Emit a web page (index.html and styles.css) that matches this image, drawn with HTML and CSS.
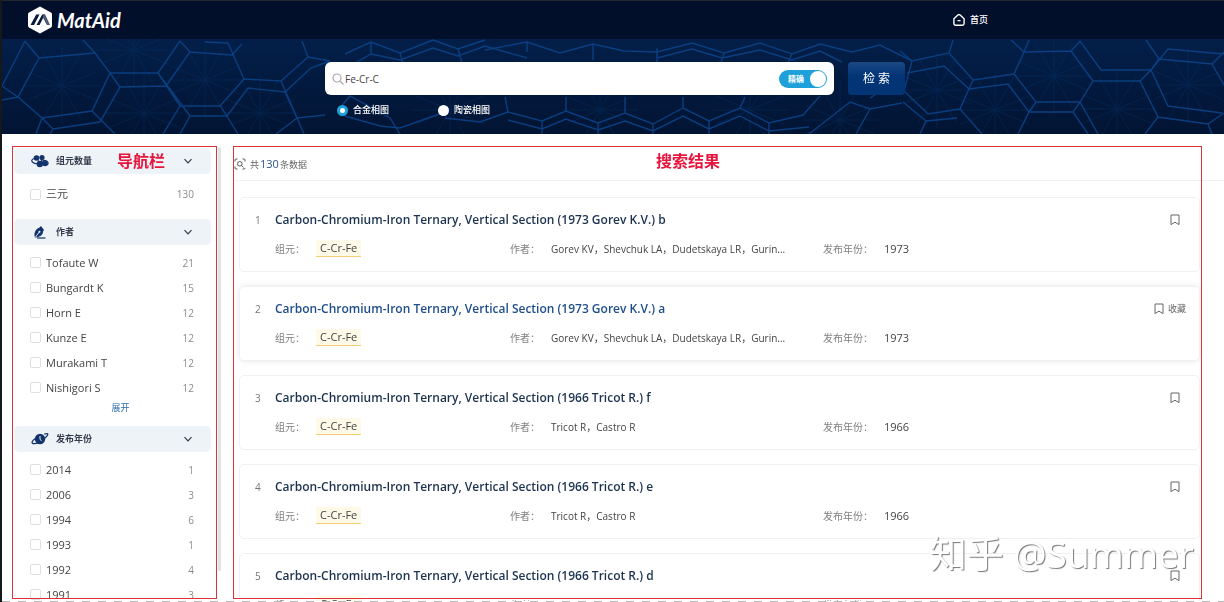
FILE: index.html
```html
<!DOCTYPE html>
<html lang="zh-CN">
<head>
    <meta charset="UTF-8">
    <meta name="viewport" content="width=device-width, initial-scale=1.0">
    <title>MatAid</title>
    <link rel="stylesheet" href="styles.css">
</head>
<body>
    <svg class="sprite" aria-hidden="true">
        <symbol id="chevron" viewBox="0 0 10 10"><path d="M1.5 3.2 5 6.8l3.5-3.6" fill="none" stroke="currentColor" stroke-width="1.2"/></symbol>
        <symbol id="bookmark" viewBox="0 0 10 12"><path d="M1 1h8v9.6L5 8.2l-4 2.4z" fill="none" stroke="currentColor" stroke-width="1"/></symbol>
        <symbol id="spokes" viewBox="-40 -40 80 80"><path d="M-38 0H38M-34-14 34 14M-34 14 34-14M-19-33 19 33M-19 33 19-33M0-38V38"/></symbol>
    </svg>

    <header class="topbar">
        <a class="logo" href="#">
            <svg width="24" height="28" viewBox="0 0 24 28">
                <path d="M12 .5 23 6.6a2 2 0 0 1 1 1.6v11.6a2 2 0 0 1-1 1.6L12 27.5 1 21.4a2 2 0 0 1-1-1.6V8.2a2 2 0 0 1 1-1.6z" fill="#fff"/>
                <path d="M2.5 19 8.200 8.500h3.300L6 19zM8.500 19l5.700-10.500h2.600L11.600 19z" fill="#0a1a3c"/>
                <path d="M15.500 8.500h1.700L22 19h-3.200l-4-7.500z" fill="#4d5a74"/>
            </svg>
            <span>MatAid</span>
        </a>
        <a class="home" href="#">
            <svg width="12" height="12" viewBox="0 0 12 12" fill="none" stroke="#fff" stroke-width="1.4"><path d="M.9 4.7 4.6 1.3a2 2 0 0 1 2.800 0l3.700 3.400v4.800a1.700 1.700 0 0 1-1.700 1.700H2.600A1.700 1.700 0 0 1 .9 9.500zM4.500 6.600h3"/></svg>
            首页
        </a>
    </header>

    <section class="hero">
        <svg class="hero-bg" viewBox="2 39 1222 95" preserveAspectRatio="xMidYMid slice" fill="none" aria-hidden="true">
            <g class="spokes">
                <use href="#spokes" x="22" y="46" width="80" height="80"/>
                <use href="#spokes" x="104" y="73" width="80" height="80"/>
                <use href="#spokes" x="165" y="40" width="80" height="80"/>
                <use href="#spokes" x="94" y="10" width="80" height="80"/>
                <use href="#spokes" x="220" y="73" width="80" height="80"/>
                <use href="#spokes" x="410" y="70" width="80" height="80"/>
                <use href="#spokes" x="560" y="70" width="80" height="80"/>
                <use href="#spokes" x="710" y="70" width="80" height="80"/>
                <use href="#spokes" x="800" y="80" width="80" height="80"/>
                <use href="#spokes" x="897" y="50" width="80" height="80"/>
                <use href="#spokes" x="955" y="70" width="80" height="80"/>
                <use href="#spokes" x="1014" y="36" width="80" height="80"/>
                <use href="#spokes" x="1077" y="69" width="80" height="80"/>
                <use href="#spokes" x="1148" y="45" width="80" height="80"/>
            </g>
            <g class="cells">
                <path d="M25 41 2 86l16 11 24 21 50-7 18-38-15-20-12-13M25 41l14 17 56-5M39 58 18 97l-16 3M42 118l-6 16M42 118l11 11 47-7 20-35-10-14h48l22-32M120 87l46-1 24-34-10-11M158 73l22 33h40l24-27-16-36-23-1M190 52l42 3 10-11M158 73l32 43h37l21-28 37 4M180 106l-17 28M190 116l-10 18M220 105l18 29M92 111l23 23M53 129l-3 5"/>
                <path d="M302 41l6 16-27 24-37-2M308 57l22 4M330 61l-19 7-26 24 12 26-21 16M281 81l16 37 28-3M297 118l7 16M345 54l26-12 29 11 33-13 25 9 27-9M350 66l21-12 29 6 33-12 25 8 27-10 42 12M371 42v12M400 53l3 10M458 49l4 14M340 108l10-12 40 22 10 16M345 116l35 10 20 2 45-16M445 118l35 4 28-10-3-15"/>
                <path d="M508 112l34 9 24-10 32 12 27-10 28 11 30-16 26 13 31-13 29 15 34-8 17-19M508 120l34 9 24-10 32 11 27-9 28 10 30-15 26 13 31-13 29 15 40-4M566 111V97M625 97v16M683 97v11M745 97l-5 11M542 121v13M598 123v11M653 124v10M709 121v13M769 123v11"/>
                <path d="M485 50l42-8 33 11 33-9 31 7 33 1 35-9 32 10 36-10 32 11 28-10 32 8 28-7 32 16 37-8 4-13M527 42v10M593 44v16M657 48v14M724 53l-3 10M792 54l-4 9M657 58l35-9 30 9M722 58l38-8 32 10 28-9 22 11M870 98l14-9 14 4M870 109l32-6M870 109l-14 25M870 109l-20-7-41 32"/>
                <path d="M900 51l12 10-8 30 24 23 32-5 13-29-24-27M973 80l41-6 10-22 5-12M1011 40l13 12 47-1 9-10 21 29h50l17-21 56 5M1071 51l22 30-13 21h-44l-22-28M1093 81h47l11-11 17 36 54 7M1140 81l18 36 50 7 16-11M1146 40l13 19 53 5 12-12M1159 59l-8 11M1212 64l12 21M907 73l37-7 25 23 39-5 21 28-11 22M1029 112l7-10M1029 112h44l7-10 18 32M1073 112l15 22M960 109l22 25M957 118l-31 3-6 13M903 102l23 19M1158 117l-13 17M1208 124l4 10"/>
            </g>
        </svg>

        <form class="search">
            <div class="search-row">
                <div class="search-box">
                    <svg width="12" height="12" viewBox="0 0 12 12" fill="none" stroke="#a9a9a9" stroke-width="1.2"><circle cx="5" cy="5" r="4"/><path d="m8 8 3.5 3.5"/></svg>
                    <input class="search-input" type="text" value="Fe-Cr-C" aria-label="搜索">
                    <label class="switch">
                        <input type="checkbox" checked>
                        <span>精确</span>
                    </label>
                </div>
                <button class="search-btn" type="button">检 索</button>
            </div>
            <div class="search-types">
                <label><input type="radio" name="type" checked>合金相图</label>
                <label><input type="radio" name="type">陶瓷相图</label>
            </div>
        </form>
    </section>

    <main class="content">
        <aside class="panel sidebar">
            <span class="note note-nav">导航栏</span>
            <section class="group">
                <button class="group-head" type="button">
                    <svg width="18" height="14" viewBox="0 0 18 14"><g fill="#12336b"><circle cx="5.5" cy="4" r="2.8"/><circle cx="11" cy="3.500" r="2.600"/><circle cx="8.800" cy="10" r="3.200"/><circle cx="14" cy="9.500" r="2.800"/></g><path d="M3.500 4.500C.5 5 0 7 2 8.500s4 1.500 6 .5 4-3 6.500-2.500 3.500 3 1.500 4.500" fill="none" stroke="#12336b" stroke-width="1.200"/><path d="M7 6.500 9 7.800l2-1.600M11.200 10.500l.8-2" fill="none" stroke="#12336b"/></svg>
                    <span>组元数量</span>
                    <svg class="chevron"><use href="#chevron"/></svg>
                </button>
                <ul>
                    <li class="single"><label><input type="checkbox">三元</label><em>130</em></li>
                </ul>
            </section>
            <section class="group">
                <button class="group-head" type="button">
                    <svg width="18" height="14" viewBox="0 0 18 14"><path d="M4 12.500C2.500 8.500 4 4.500 8.500 2.500L10 1l3 4-1 1.500c.2 3-2.500 5.500-8 6z" fill="#12336b"/><path d="m4.500 12 3.800-5" stroke="#eef3f8" stroke-width=".9"/><circle cx="8.500" cy="6.800" r="1" fill="#eef3f8"/><path d="M6 13h8.500" stroke="#12336b" stroke-width="1.200"/></svg>
                    <span>作者</span>
                    <svg class="chevron"><use href="#chevron"/></svg>
                </button>
                <ul>
                    <li><label><input type="checkbox">Tofaute W</label><em>21</em></li>
                    <li><label><input type="checkbox">Bungardt K</label><em>15</em></li>
                    <li><label><input type="checkbox">Horn E</label><em>12</em></li>
                    <li><label><input type="checkbox">Kunze E</label><em>12</em></li>
                    <li><label><input type="checkbox">Murakami T</label><em>12</em></li>
                    <li><label><input type="checkbox">Nishigori S</label><em>12</em></li>
                </ul>
                <a class="more" href="#">展开</a>
            </section>
            <section class="group">
                <button class="group-head" type="button">
                    <svg width="18" height="14" viewBox="0 0 18 14"><circle cx="9" cy="7" r="5.2" fill="#12336b"/><path d="M5 6C1 8.500.2 11 2 11.500c3 .7 8-2 11-4.500s4.500-4.600 3.500-5.300c-.7-.5-2 0-3.200.5" fill="none" stroke="#12336b" stroke-width="1.3"/><path d="M9 4v3.500l1.500 1" fill="none" stroke="#eef3f8"/></svg>
                    <span>发布年份</span>
                    <svg class="chevron"><use href="#chevron"/></svg>
                </button>
                <ul>
                    <li><label><input type="checkbox">2014</label><em>1</em></li>
                    <li><label><input type="checkbox">2006</label><em>3</em></li>
                    <li><label><input type="checkbox">1994</label><em>6</em></li>
                    <li><label><input type="checkbox">1993</label><em>1</em></li>
                    <li><label><input type="checkbox">1992</label><em>4</em></li>
                    <li><label><input type="checkbox">1991</label><em>3</em></li>
                </ul>
            </section>
        </aside>
        <div class="scrollbar"></div>

        <section class="panel results">
            <span class="note note-results">搜索结果</span>
            <div class="summary">
                <svg width="12" height="12" viewBox="0 0 12 12" fill="none" stroke="#555" stroke-width="1"><path d="M1 3.500V2a1 1 0 0 1 1-1h1.500M8.500 1H10a1 1 0 0 1 1 1v1.500M1 8.500V10a1 1 0 0 0 1 1h1.500M8.500 11H10a1 1 0 0 0 1-1"/><circle cx="5.800" cy="5.800" r="2.300"/><path d="m7.500 7.500 2 2"/></svg>
                <p>共<b>130</b>条数据</p>
            </div>
            <article class="card">
                <span class="num">1</span>
                <a class="title" href="#">Carbon-Chromium-Iron Ternary, Vertical Section (1973 Gorev K.V.) b</a>
                <button class="fav" type="button" aria-label="收藏"><svg><use href="#bookmark"/></svg></button>
                <dl>
                    <div><dt>组元：</dt><dd class="tag">C-Cr-Fe</dd></div>
                    <div><dt>作者：</dt><dd class="authors">Gorev KV，Shevchuk LA，Dudetskaya LR，Gurin...</dd></div>
                    <div><dt>发布年份：</dt><dd>1973</dd></div>
                </dl>
            </article>
            <article class="card active">
                <span class="num">2</span>
                <a class="title" href="#">Carbon-Chromium-Iron Ternary, Vertical Section (1973 Gorev K.V.) a</a>
                <button class="fav" type="button"><svg><use href="#bookmark"/></svg>收藏</button>
                <dl>
                    <div><dt>组元：</dt><dd class="tag">C-Cr-Fe</dd></div>
                    <div><dt>作者：</dt><dd class="authors">Gorev KV，Shevchuk LA，Dudetskaya LR，Gurin...</dd></div>
                    <div><dt>发布年份：</dt><dd>1973</dd></div>
                </dl>
            </article>
            <article class="card">
                <span class="num">3</span>
                <a class="title" href="#">Carbon-Chromium-Iron Ternary, Vertical Section (1966 Tricot R.) f</a>
                <button class="fav" type="button" aria-label="收藏"><svg><use href="#bookmark"/></svg></button>
                <dl>
                    <div><dt>组元：</dt><dd class="tag">C-Cr-Fe</dd></div>
                    <div><dt>作者：</dt><dd class="authors">Tricot R，Castro R</dd></div>
                    <div><dt>发布年份：</dt><dd>1966</dd></div>
                </dl>
            </article>
            <article class="card">
                <span class="num">4</span>
                <a class="title" href="#">Carbon-Chromium-Iron Ternary, Vertical Section (1966 Tricot R.) e</a>
                <button class="fav" type="button" aria-label="收藏"><svg><use href="#bookmark"/></svg></button>
                <dl>
                    <div><dt>组元：</dt><dd class="tag">C-Cr-Fe</dd></div>
                    <div><dt>作者：</dt><dd class="authors">Tricot R，Castro R</dd></div>
                    <div><dt>发布年份：</dt><dd>1966</dd></div>
                </dl>
            </article>
            <article class="card">
                <span class="num">5</span>
                <a class="title" href="#">Carbon-Chromium-Iron Ternary, Vertical Section (1966 Tricot R.) d</a>
                <button class="fav" type="button" aria-label="收藏"><svg><use href="#bookmark"/></svg></button>
                <dl>
                    <div><dt>组元：</dt><dd class="tag">C-Cr-Fe</dd></div>
                    <div><dt>作者：</dt><dd class="authors">Tricot R，Castro R</dd></div>
                    <div><dt>发布年份：</dt><dd>1966</dd></div>
                </dl>
            </article>
        </section>
        <div class="gutter"></div>
        <span class="watermark">知乎 @Summer</span>
    </main>
</body>
</html>
```
FILE: styles.css
```css
* {
    box-sizing: border-box;
}

body {
    margin: 0;
    height: 100vh;
    display: flex;
    flex-direction: column;
    overflow: hidden;
    border-left: 2px solid #15191c;
    background: #fff;
    color: #444;
    font-family: "Open Sans", "Noto Sans CJK SC", sans-serif;
    font-size: 11px;
    line-height: 16px;
}

a {
    color: inherit;
    text-decoration: none;
}

button {
    border: 0;
    background: none;
    padding: 0;
    font: inherit;
    color: inherit;
    cursor: pointer;
}

ul, dl, dd, p {
    margin: 0;
    padding: 0;
    list-style: none;
}

.sprite {
    display: none;
}

/* header */
.topbar {
    flex: none;
    height: 39px;
    display: flex;
    justify-content: space-between;
    align-items: center;
    padding: 0 236px 0 26px;
    border-top: 1px solid #23272d;
    background: #020f2b;
    color: #fff;
}

.logo {
    display: flex;
    align-items: center;
    gap: 5px;
    font: italic 700 20px/28px Lato, sans-serif;
}

.home {
    display: flex;
    align-items: center;
    gap: 5px;
    font-size: 9px;
    font-weight: 500;
}

/* search */
.hero {
    flex: none;
    position: relative;
    display: flex;
    justify-content: center;
    height: 95px;
    padding: 23px 20px 0 24px;
    background: linear-gradient(#031f49, #021433);
}

.hero-bg {
    position: absolute;
    inset: 0;
    width: 100%;
    height: 100%;
}

.spokes {
    stroke: #0b3a73;
    stroke-width: 1;
    opacity: 0.35;
}

.cells {
    stroke: #0d4387;
    stroke-width: 1.4;
    opacity: 0.9;
}

.search {
    position: relative;
    width: 100%;
    max-width: 580px;
}

.search-row {
    display: flex;
    gap: 14px;
}

.search-box {
    flex: 1;
    display: flex;
    align-items: center;
    gap: 1px;
    height: 33px;
    padding: 0 7px;
    border-radius: 6px;
    background: #fff;
}

.search-input {
    flex: 1;
    min-width: 0;
    border: 0;
    outline: 0;
    padding: 0;
    background: none;
    font: inherit;
    font-size: 10px;
    color: #444;
}

.switch {
    display: flex;
    align-items: center;
    position: relative;
    width: 48px;
    height: 18px;
    padding-left: 9px;
    border-radius: 9px;
    background: #1ea0da;
    color: #fff;
    font-size: 8px;
    font-weight: 700;
}

.switch input {
    appearance: none;
    position: absolute;
    right: 1px;
    width: 16px;
    height: 16px;
    margin: 0;
    border-radius: 50%;
    background: #fff;
}

.search-btn {
    width: 57px;
    height: 33px;
    border-radius: 4px;
    background: linear-gradient(#1d4a86, #033576 40%, #033576);
    color: #fff;
    font-size: 12px;
}

.search-types {
    display: flex;
    gap: 49px;
    padding: 7px 12px;
    color: #fff;
    font-size: 9px;
    font-weight: 500;
}

.search-types label {
    display: flex;
    align-items: center;
    gap: 5px;
}

.search-types input {
    appearance: none;
    width: 11px;
    height: 11px;
    margin: 0;
    border-radius: 50%;
    background: #fff;
}

.search-types input:checked {
    border: 3px solid #1ea0da;
}

/* content */
.content {
    flex: 1;
    min-height: 0;
    position: relative;
    display: flex;
    padding: 12px 0 0 10px;
}

.content::after {
    content: "";
    position: absolute;
    left: 0;
    right: 0;
    bottom: 0;
    height: 1px;
    background: repeating-linear-gradient(90deg, #b4b4b4 0 8px, #fff 8px 16px);
}

.panel {
    position: relative;
    overflow: hidden;
}

.panel::after {
    content: "";
    position: absolute;
    inset: 0 0 3px;
    border: 1px solid #dd3338;
    pointer-events: none;
}

.note {
    position: absolute;
    color: #e8143c;
    font-size: 16px;
    font-weight: 700;
    line-height: 24px;
}

.note-nav {
    left: 105px;
    top: 3px;
}

.note-results {
    left: 423px;
    top: 3px;
}

.sidebar {
    flex: none;
    width: 205px;
    padding: 2px 6px 0 2px;
}

.group {
    margin-bottom: 10px;
}

.group-head {
    display: flex;
    align-items: center;
    gap: 7px;
    width: 100%;
    height: 26px;
    padding: 0 18px 0 17px;
    border-radius: 5px;
    background: #eef3f8;
    color: #333c4a;
    font-size: 9px;
    font-weight: 700;
}

.chevron {
    width: 10px;
    height: 10px;
    margin-left: auto;
}

.group ul {
    padding-top: 5px;
}

.group li {
    display: flex;
    align-items: center;
    justify-content: space-between;
    height: 25px;
    padding: 0 17px 0 16px;
}

.group .single {
    height: 30px;
}

.group label {
    display: flex;
    align-items: center;
    gap: 5px;
}

.group input {
    appearance: none;
    width: 11px;
    height: 11px;
    margin: 0;
    border: 1px solid #dcdfe4;
    border-radius: 2px;
    background: #fff;
}

.group em {
    color: #8c8c8c;
    font-size: 10px;
    font-style: normal;
}

.more {
    display: block;
    color: #2a6bab;
    font-size: 9px;
    text-align: center;
    padding-left: 16px;
}

.scrollbar {
    flex: none;
    width: 3px;
    height: 424px;
    margin: 1px 12px 0 1px;
    border-radius: 2px;
    background: #e0e4e4;
}

.results {
    flex: 1;
    min-width: 0;
}

.summary {
    display: flex;
    align-items: center;
    gap: 4px;
    height: 35px;
    padding: 2px 0 0 1px;
    border-bottom: 1px solid #eef0f2;
    color: #666;
    font-size: 9px;
    margin-bottom: 16px;
}

.summary b {
    margin: 0 1px;
    color: #2a5091;
    font-size: 11px;
    font-weight: 400;
}

/* continues the divider under the summary */
.gutter {
    flex: none;
    width: 22px;
    height: 35px;
    border-bottom: 1px solid #eef0f2;
}

.card {
    display: grid;
    grid-template-columns: 20px 1fr auto;
    align-items: center;
    height: 75px;
    margin: 0 2px 14px 6px;
    padding: 8px 13px 8px 15px;
    border: 1px solid #eef0f2;
    border-radius: 5px;
}

.card.active {
    box-shadow: 0 0 6px rgba(0, 0, 0, 0.1);
}

.num {
    color: #777;
    font-size: 10px;
}

.title {
    color: #1c3350;
    font-size: 12px;
    font-weight: 600;
}

.active .title {
    color: #1f4e8c;
}

.fav {
    display: flex;
    align-items: center;
    gap: 4px;
    color: #666;
    font-size: 9px;
}

.fav[aria-label] {
    padding-right: 6px;
}

.fav svg {
    width: 10px;
    height: 12px;
}

.card dl {
    grid-column: 2 / 4;
    display: grid;
    grid-template-columns: 235px 313px 1fr;
}

.card dl div {
    display: flex;
    align-items: center;
    gap: 11px;
}

.card dt {
    color: #808080;
    font-size: 10px;
}

.card dd {
    white-space: nowrap;
}

.card .authors {
    font-size: 10px;
}

.card .tag {
    padding: 0 4px;
    border-bottom: 1px solid #f5cf73;
    background: #fff9e8;
}

.watermark {
    position: absolute;
    right: 30px;
    bottom: 24px;
    color: #fff;
    font-size: 37px;
    line-height: 48px;
    text-shadow: 1px 1px 1px #777;
}
```
